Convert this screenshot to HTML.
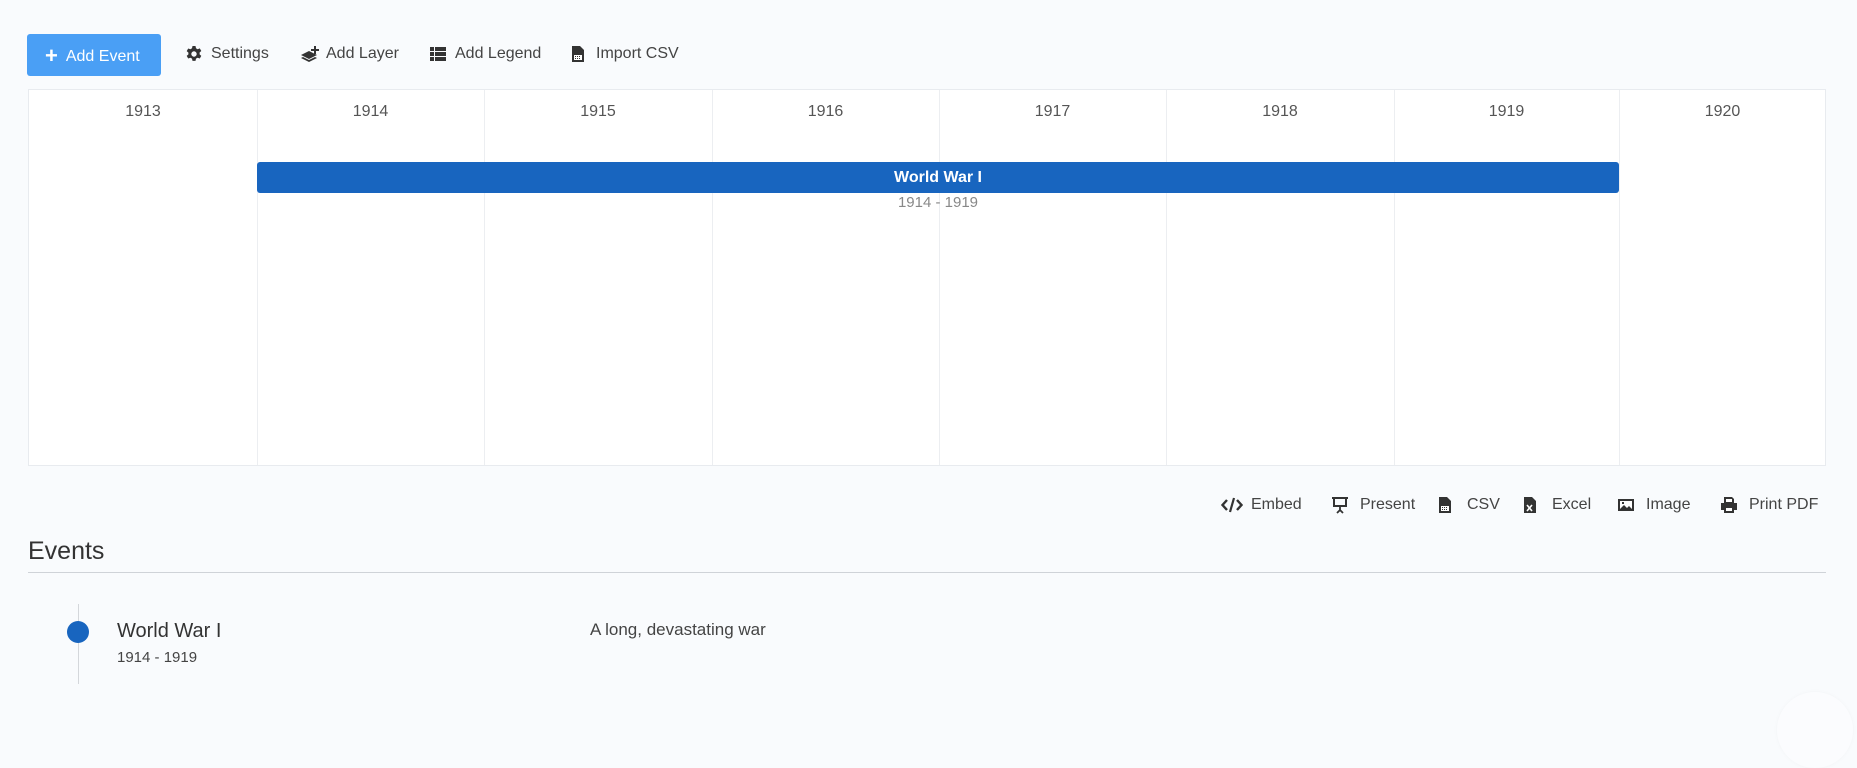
<!DOCTYPE html>
<html><head><meta charset="utf-8">
<style>
*{margin:0;padding:0;box-sizing:border-box}
body{width:1857px;height:734px;background:#f9fbfd;font-family:"Liberation Sans",sans-serif;color:#444;position:relative;overflow:hidden}
.abs{position:absolute}
.btn{left:27px;top:34px;width:134px;height:42px;background:#4a9ff5;border-radius:3px;color:#fff;font-size:16px;line-height:40px;padding-left:18px}
.btn b{font-weight:bold;font-size:22px;position:relative;top:2px;margin-right:8px}
.tb{top:44px;font-size:16px;color:#444;line-height:20px;white-space:nowrap}
.tb svg{position:absolute;left:-26px;top:1px}
.box{left:28px;top:89px;width:1798px;height:377px;background:#fff;border:1px solid #e8ebef}
.col{position:absolute;top:0;bottom:0;border-left:1px solid #eceef1}
.yr{position:absolute;top:13px;font-size:16px;color:#555;text-align:center}
.bar{left:257px;top:162px;width:1362px;height:31px;background:#1865bf;border-radius:3px;color:#fff;font-weight:bold;font-size:16px;text-align:center;line-height:31px}
.sub{left:257px;top:194px;width:1362px;text-align:center;font-size:15px;color:#888}
.ex{top:495px;font-size:16px;color:#444;white-space:nowrap;line-height:20px}
.ex svg{position:absolute;left:-30px;top:1px}
</style></head><body>
<div class="abs btn"><b>+</b>Add Event</div>
<div class="abs tb" style="left:211px"><svg width="18" height="18" viewBox="0 0 18 18"><path fill="#333" d="M7.5 1h3l.5 2.3 1.6.9 2.2-.8 1.5 2.6-1.7 1.5v1.9l1.7 1.5-1.5 2.6-2.2-.8-1.6.9-.5 2.3h-3l-.5-2.3-1.6-.9-2.2.8-1.5-2.6 1.7-1.5V7.6L1.7 6.1l1.5-2.6 2.2.8L7 3.3zM9 6.3A2.7 2.7 0 1 0 9 11.7 2.7 2.7 0 1 0 9 6.3z"/></svg>Settings</div>
<div class="abs tb" style="left:326px"><svg width="20" height="18" viewBox="0 0 20 18"><path fill="#333" d="M1 10l8-4 8 4-8 4zM1 13l2-1 6 3 6-3 2 1-8 4zM14 1h2v3h3v2h-3v3h-2V6h-3V4h3z"/></svg>Add Layer</div>
<div class="abs tb" style="left:455px"><svg width="18" height="18" viewBox="0 0 18 18"><path fill="#333" d="M1 2h4v4H1zM6 2h11v4H6zM1 7h4v4H1zM6 7h11v4H6zM1 12h4v4H1zM6 12h11v4H6z"/></svg>Add Legend</div>
<div class="abs tb" style="left:596px"><svg width="16" height="18" viewBox="0 0 16 18"><path fill="#333" d="M2 1h8l4 4v12H2z"/><path fill="#fff" d="M4 10h8v5H4z"/><path fill="#333" d="M5 11h1v1H5zM7 11h1v1H7zM9 11h1v1H9zM5 13h1v1H5zM7 13h1v1H7zM9 13h1v1H9z"/></svg>Import CSV</div>

<div class="abs box">
<div class="col" style="left:228px"></div><div class="col" style="left:455px"></div><div class="col" style="left:683px"></div><div class="col" style="left:910px"></div><div class="col" style="left:1137px"></div><div class="col" style="left:1365px"></div><div class="col" style="left:1590px"></div>
<div class="yr" style="left:0;width:228px">1913</div>
<div class="yr" style="left:228px;width:227px">1914</div>
<div class="yr" style="left:455px;width:228px">1915</div>
<div class="yr" style="left:683px;width:227px">1916</div>
<div class="yr" style="left:910px;width:227px">1917</div>
<div class="yr" style="left:1137px;width:228px">1918</div>
<div class="yr" style="left:1365px;width:225px">1919</div>
<div class="yr" style="left:1590px;width:207px">1920</div>
</div>
<div class="abs bar">World War I</div>
<div class="abs sub">1914 - 1919</div>

<div class="abs ex" style="left:1251px"><svg width="22" height="18" viewBox="0 0 22 18"><path fill="none" stroke="#333" stroke-width="2.4" d="M6 4L1.5 9 6 14M16 4l4.5 5L16 14"/><path fill="none" stroke="#333" stroke-width="2.2" d="M13 2L9 16"/></svg>Embed</div>
<div class="abs ex" style="left:1360px"><svg width="20" height="18" viewBox="0 0 20 18"><path fill="#333" d="M2 1h16v2h-1v8H3V3H2zM5 3v6h10V3z"/><path fill="none" stroke="#333" stroke-width="1.8" d="M10 11v3M7 17l3-3 3 3"/></svg>Present</div>
<div class="abs ex" style="left:1467px"><svg width="16" height="18" viewBox="0 0 16 18"><path fill="#333" d="M2 1h8l4 4v12H2z"/><path fill="#fff" d="M4 10h8v5H4z"/><path fill="#333" d="M5 11h1v1H5zM7 11h1v1H7zM9 11h1v1H9zM5 13h1v1H5zM7 13h1v1H7zM9 13h1v1H9z"/></svg>CSV</div>
<div class="abs ex" style="left:1552px"><svg width="16" height="18" viewBox="0 0 16 18"><path fill="#333" d="M2 1h8l4 4v12H2z"/><path fill="none" stroke="#fff" stroke-width="1.6" d="M5 9l5 6M10 9l-5 6"/></svg>Excel</div>
<div class="abs ex" style="left:1646px"><svg width="20" height="18" viewBox="0 0 20 18"><path fill="#333" d="M2 3h16v12H2z"/><path fill="#fff" d="M4 5h12v8H4z"/><path fill="#333" d="M4 13l4-4 3 3 2-2 3 3zM6 6h2v2H6z"/></svg>Image</div>
<div class="abs ex" style="left:1749px"><svg width="20" height="18" viewBox="0 0 20 18"><path fill="#333" d="M5 1h8l2 2v4H5zM2 7h16v7h-3v3H5v-3H2z"/><path fill="#fff" d="M7 3h6v3H7zM7 12h6v3H7z"/></svg>Print PDF</div>

<div class="abs" style="left:28px;top:537px;font-size:25px;color:#333">Events</div>
<div class="abs" style="left:28px;top:572px;width:1798px;height:1px;background:#cfd3d8"></div>

<div class="abs" style="left:78px;top:604px;width:1px;height:80px;background:#d4d7db"></div>
<div class="abs" style="left:67px;top:621px;width:22px;height:22px;border-radius:50%;background:#1865bf"></div>
<div class="abs" style="left:117px;top:620px;font-size:20px;color:#333">World War I</div>
<div class="abs" style="left:117px;top:649px;font-size:15px;color:#444">1914 - 1919</div>
<div class="abs" style="left:590px;top:620px;font-size:17px;color:#444">A long, devastating war</div>

<div class="abs" style="left:1777px;top:692px;width:76px;height:76px;border-radius:50%;background:#fbfcfe;box-shadow:0 0 4px rgba(0,0,0,0.03)"></div>
</body></html>
